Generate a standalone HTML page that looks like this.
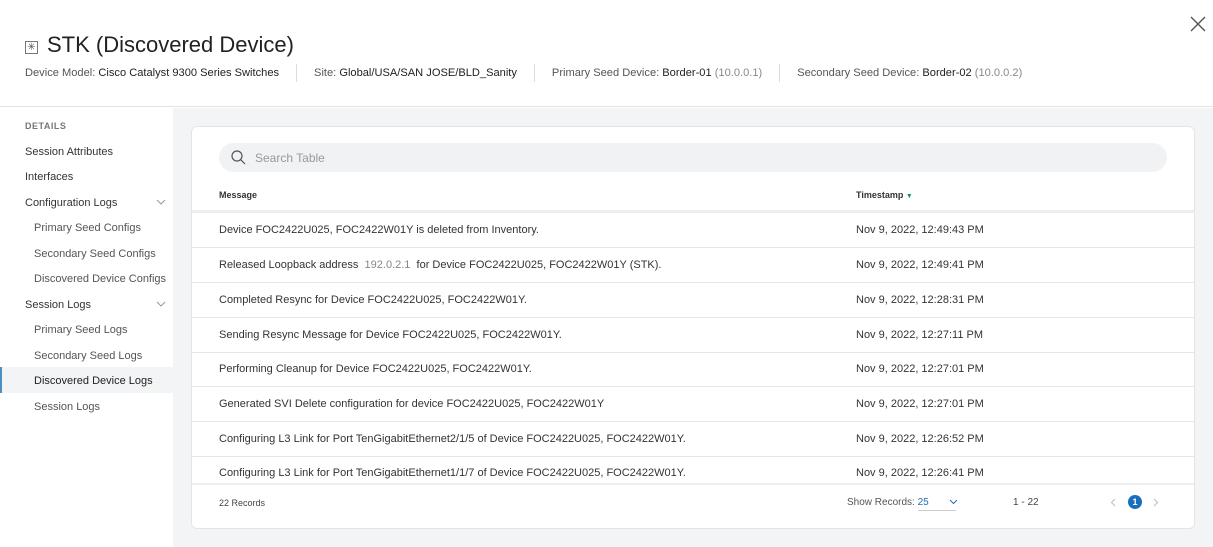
<!DOCTYPE html>
<html><head><meta charset="utf-8"><style>
*{box-sizing:border-box;margin:0;padding:0}
body{width:1213px;height:547px;overflow:hidden;background:#fff;font-family:"Liberation Sans",sans-serif;color:#333;position:relative}
.hdr{position:absolute;left:0;top:0;width:1213px;height:107px;border-bottom:1px solid #e2e3e5}
.title{position:absolute;left:25px;top:32px;font-size:22px;color:#222}
.title .ic{display:inline-block;width:13px;height:13px;border:1px solid #777;margin-right:9px;vertical-align:2px;font-size:10px;line-height:11px;text-align:center;color:#555}
.meta{position:absolute;left:25px;top:64px;font-size:11.1px;color:#222;white-space:nowrap}
.meta span.l{color:#555}
.meta .sep{display:inline-block;width:1px;height:18px;background:#ddd;vertical-align:middle;margin:0 17px}
.meta .g{color:#888}
.close{position:absolute;left:1188px;top:14px;width:20px;height:20px}
.side{position:absolute;left:0;top:108px;width:173px;height:439px;background:#fff}
.side div{position:absolute;font-size:11px;color:#333;white-space:nowrap}
.side .sub{left:34px;color:#555}
.side .top{left:25px}
.main{position:absolute;left:173px;top:108px;width:1040px;height:439px;background:#f3f4f6}
.card{position:absolute;left:18px;top:18px;width:1004px;height:403px;background:#fff;border:1px solid #e3e4e6;border-radius:6px;overflow:hidden}
.search{position:absolute;left:27px;top:16px;width:948px;height:29px;background:#f1f2f3;border-radius:15px}
.search span{position:absolute;left:36px;top:8px;font-size:12px;color:#999}
.th{position:absolute;top:63px;font-size:9px;font-weight:bold;color:#333}
.hline{position:absolute;left:0;top:83px;width:1004px;height:3px;background:#eee}
.row{position:absolute;left:0;width:1004px;height:35px;border-bottom:1px solid #e5e6e8;font-size:11px;color:#333}
.row .m{position:absolute;left:27px;top:11px;white-space:nowrap}
.row .t{position:absolute;left:664px;top:11px;white-space:nowrap}
.foot{position:absolute;left:0;top:356px;width:1004px;height:47px;border-top:2px solid #eee;background:#fff;font-size:9px}
.foot div{position:absolute;white-space:nowrap}
</style></head><body>
<div class="hdr">
<div class="title"><span class="ic">✳</span>STK (Discovered Device)</div>
<div class="meta"><span class="l">Device Model:</span> Cisco Catalyst 9300 Series Switches<span class="sep"></span><span class="l">Site:</span> Global/USA/SAN JOSE/BLD_Sanity<span class="sep"></span><span class="l">Primary Seed Device:</span> Border-01 <span class="g">(10.0.0.1)</span><span class="sep"></span><span class="l">Secondary Seed Device:</span> Border-02 <span class="g">(10.0.0.2)</span></div>
<svg class="close" viewBox="0 0 20 20"><path d="M3 3L17 17M17 3L3 17" stroke="#555" stroke-width="1.4"/></svg>
</div>
<div class="side">
<div class="top" style="top:13px;font-size:9px;font-weight:bold;color:#777;letter-spacing:.5px">DETAILS</div>
<div class="top" style="top:38px">Session Attributes</div>
<div class="top" style="top:63px">Interfaces</div>
<div class="top" style="top:89px">Configuration Logs</div>
<svg style="position:absolute;left:156px;top:91px" width="10" height="6"><path d="M1 1L5 5L9 1" stroke="#999" fill="none"/></svg>
<div class="sub" style="top:114px">Primary Seed Configs</div>
<div class="sub" style="top:140px">Secondary Seed Configs</div>
<div class="sub" style="top:165px">Discovered Device Configs</div>
<div class="top" style="top:191px">Session Logs</div>
<svg style="position:absolute;left:156px;top:193px" width="10" height="6"><path d="M1 1L5 5L9 1" stroke="#999" fill="none"/></svg>
<div class="sub" style="top:216px">Primary Seed Logs</div>
<div class="sub" style="top:242px">Secondary Seed Logs</div>
<div style="left:0;top:259px;width:173px;height:26px;background:#f3f4f6;border-left:2px solid #4a90c0"></div>
<div class="sub" style="top:267px;color:#222">Discovered Device Logs</div>
<div class="sub" style="top:293px">Session Logs</div>
</div>
<div class="main"><div class="card">
<div class="search"><svg style="position:absolute;left:12px;top:7px" width="15" height="15" viewBox="0 0 15 15"><circle cx="6" cy="6" r="5" stroke="#555" stroke-width="1.2" fill="none"/><path d="M9.6 9.6L14 14" stroke="#555" stroke-width="1.2"/></svg><span>Search Table</span></div>
<div class="th" style="left:27px">Message</div>
<div class="th" style="left:664px">Timestamp <span style="color:#1a8a7a;font-size:7px">▼</span></div>
<div class="hline"></div>
<div class="row" style="top:86px"><div class="m">Device FOC2422U025, FOC2422W01Y is deleted from Inventory.</div><div class="t">Nov 9, 2022, 12:49:43 PM</div></div>
<div class="row" style="top:121px"><div class="m">Released Loopback address &nbsp;<span style="color:#888">192.0.2.1</span>&nbsp; for Device FOC2422U025, FOC2422W01Y (STK).</div><div class="t">Nov 9, 2022, 12:49:41 PM</div></div>
<div class="row" style="top:156px"><div class="m">Completed Resync for Device FOC2422U025, FOC2422W01Y.</div><div class="t">Nov 9, 2022, 12:28:31 PM</div></div>
<div class="row" style="top:191px"><div class="m">Sending Resync Message for Device FOC2422U025, FOC2422W01Y.</div><div class="t">Nov 9, 2022, 12:27:11 PM</div></div>
<div class="row" style="top:225px"><div class="m">Performing Cleanup for Device FOC2422U025, FOC2422W01Y.</div><div class="t">Nov 9, 2022, 12:27:01 PM</div></div>
<div class="row" style="top:260px"><div class="m">Generated SVI Delete configuration for device FOC2422U025, FOC2422W01Y</div><div class="t">Nov 9, 2022, 12:27:01 PM</div></div>
<div class="row" style="top:295px"><div class="m">Configuring L3 Link for Port TenGigabitEthernet2/1/5 of Device FOC2422U025, FOC2422W01Y.</div><div class="t">Nov 9, 2022, 12:26:52 PM</div></div>
<div class="row" style="top:329px"><div class="m">Configuring L3 Link for Port TenGigabitEthernet1/1/7 of Device FOC2422U025, FOC2422W01Y.</div><div class="t">Nov 9, 2022, 12:26:41 PM</div></div>
<div class="foot">
<div style="left:27px;top:13px;color:#444">22 Records</div>
<div style="left:655px;top:12px;font-size:10px;color:#555">Show Records: <span style="color:#1f6fb5;display:inline-block;width:38px;border-bottom:1px solid #ccc;padding-bottom:2px">25</span></div>
<svg style="position:absolute;left:757px;top:14px" width="9" height="6"><path d="M1 1L4.5 4.5L8 1" stroke="#2a6fb0" fill="none"/></svg>
<div style="left:821px;top:12px;font-size:10px;color:#444">1 - 22</div>
<svg style="position:absolute;left:918px;top:13px" width="6" height="9"><path d="M5 1L1.5 4.5L5 8" stroke="#bbb" fill="none"/></svg>
<div style="left:936px;top:10px;width:14px;height:14px;border-radius:7px;background:#1a6ebd;color:#fff;font-size:9px;font-weight:bold;text-align:center;line-height:14px">1</div>
<svg style="position:absolute;left:961px;top:13px" width="6" height="9"><path d="M1 1L4.5 4.5L1 8" stroke="#bbb" fill="none"/></svg>
</div>
</div></div>
</body></html>
